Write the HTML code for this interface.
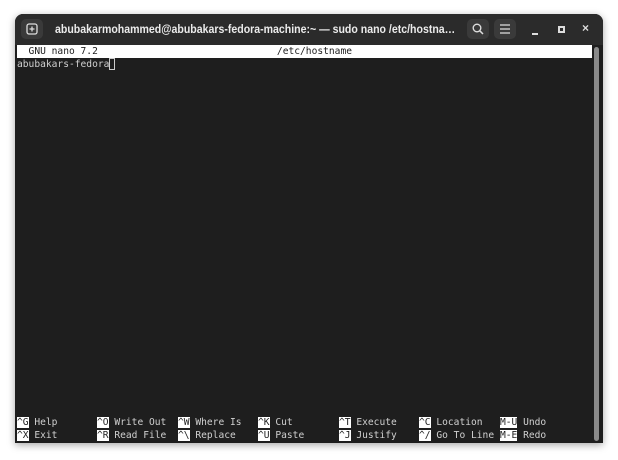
<!DOCTYPE html>
<html><head><style>
*{margin:0;padding:0;box-sizing:border-box}
body{width:618px;height:460px;background:#fff;position:relative;overflow:hidden;font-family:"Liberation Sans",sans-serif}
.win{position:absolute;left:15px;top:14px;width:588px;height:429px;background:#1e1e1e;border-radius:8px 8px 0 0;box-shadow:0 2px 8px rgba(0,0,0,.35);overflow:hidden}
.tb{position:absolute;left:0;top:0;width:588px;height:31px;background:#2b2b2b}
.btn{position:absolute;top:5px;width:22px;height:20px;background:#3a3a3a;border-radius:5px}
.title{position:absolute;left:40px;top:8px;color:#ececec;font-size:12px;font-weight:bold;white-space:nowrap;transform:scaleX(0.88);transform-origin:left top}
.mono{font-family:"DejaVu Sans Mono","Liberation Mono",monospace;font-size:9.6px;line-height:13px;color:#d0d0d0;white-space:pre;position:absolute}
.hdr{position:absolute;left:2px;top:31px;width:575px;height:13px;background:#fff}
.k{background:#fff;color:#1e1e1e}
.sb{position:absolute;left:579px;top:33px;width:5px;height:394px;background:#8a8a8a;border-radius:3px}
</style></head><body>
<div class="win">
<div class="tb">
 <div class="btn" style="left:6px"></div>
 <svg style="position:absolute;left:11px;top:9px" width="12" height="12"><rect x="1" y="1" width="10" height="10" rx="2" fill="none" stroke="#ddd" stroke-width="1.3"/><path d="M6 3.5v5M3.5 6h5" stroke="#ddd" stroke-width="1.3"/></svg>
 <div class="title">abubakarmohammed@abubakars-fedora-machine:~ — sudo nano /etc/hostna…</div>
 <div class="btn" style="left:452px"></div>
 <svg style="position:absolute;left:457px;top:9px" width="12" height="12"><circle cx="5" cy="5" r="3.8" fill="none" stroke="#ddd" stroke-width="1.4"/><path d="M7.8 7.8L11 11" stroke="#ddd" stroke-width="1.5"/></svg>
 <div class="btn" style="left:479px"></div>
 <svg style="position:absolute;left:484px;top:9px" width="12" height="12"><path d="M1 2h10M1 6h10M1 10h10" stroke="#ddd" stroke-width="1.3"/></svg>
 <div style="position:absolute;left:517px;top:19px;width:6px;height:2px;background:#ddd"></div>
 <div style="position:absolute;left:543px;top:12px;width:7px;height:7px;border:2px solid #ddd"></div>
 <div style="position:absolute;left:567px;top:7px;color:#ddd;font-size:12px;font-weight:bold">×</div>
</div>
<div class="hdr"></div>
<div class="mono" style="left:2px;top:31px;color:#1e1e1e">  GNU nano 7.2                               /etc/hostname</div>
<div class="mono" style="left:2px;top:44px">abubakars-fedora<span style="display:inline-block;width:6px;height:12px;border:1px solid #ccc;vertical-align:-3px"></span></div>
<div class="sb"></div>
<div class="mono" style="left:2px;top:402px"><span class="k">^G</span> Help
<span class="k">^X</span> Exit</div>
<div class="mono" style="left:82px;top:402px"><span class="k">^O</span> Write Out
<span class="k">^R</span> Read File</div>
<div class="mono" style="left:163px;top:402px"><span class="k">^W</span> Where Is
<span class="k">^\</span> Replace</div>
<div class="mono" style="left:243px;top:402px"><span class="k">^K</span> Cut
<span class="k">^U</span> Paste</div>
<div class="mono" style="left:324px;top:402px"><span class="k">^T</span> Execute
<span class="k">^J</span> Justify</div>
<div class="mono" style="left:404px;top:402px"><span class="k">^C</span> Location
<span class="k">^/</span> Go To Line</div>
<div class="mono" style="left:485px;top:402px"><span class="k">M-U</span> Undo
<span class="k">M-E</span> Redo</div>
</div>
</body></html>
